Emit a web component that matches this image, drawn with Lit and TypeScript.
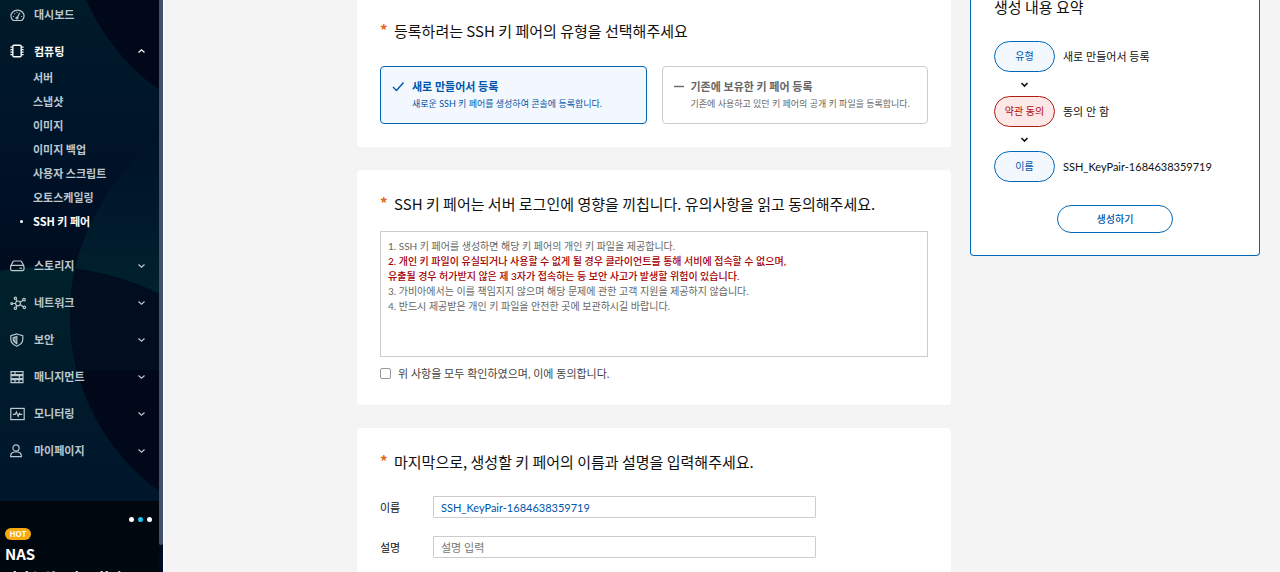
import { LitElement, html, css, svg } from "lit";
import { customElement, state } from "lit/decorators.js";

const down = svg`<path d="M1.5 1.5 L4.5 4.2 L7.5 1.5"/>`;

const icons: Record<string, unknown> = {
  dashboard: svg`<path d="M3.2 12.5 A6.6 5.9 0 1 1 11.8 12.5 Z"/><path d="M7.2 10 L9.8 4.8 M3 8.5h1 M11.2 8.5h1 M4.4 5.4l.7.6 M7 3.8v1" /><circle cx="7" cy="10" r="1"/>`,
  chip: svg`<rect x="2.8" y="1.2" width="8.4" height="11.6" rx="1.2" stroke-width="1.4"/><path d="M.4 3.2h2 M.4 5.7h2 M.4 8.2h2 M.4 10.7h2 M11.6 3.2h2 M11.6 5.7h2 M11.6 8.2h2 M11.6 10.7h2" stroke-width="1.3"/>`,
  storage: svg`<path d="M.6 7.2 L3 2.6 Q3.3 2 4 2 H10.5 Q11.2 2 11.6 2.6 L14 7.2"/><rect x=".6" y="6.4" width="13.4" height="5.2" rx="1.6"/><path d="M9.5 9.2h2.6"/>`,
  network: svg`<circle cx="8" cy="7.4" r="2.4"/><circle cx="1.8" cy="7.6" r="1"/><circle cx="5.4" cy="2.2" r="1.1"/><circle cx="14" cy="3.6" r="1.3"/><circle cx="14.4" cy="11.4" r="1.2"/><circle cx="5.4" cy="12.2" r="1.2"/><path d="M2.8 7.5h2.6 M6 3.2l.9 1.9 M10.1 6.2l2.7-1.8 M10.1 8.6l3.2 2.1 M7 9.6l-1 1.6"/>`,
  shield: svg`<path d="M6.8 1 L12.8 2.8 V6.5 Q12.6 10.8 6.8 13.2 Q1 10.8 .8 6.5 V2.8 Z"/><path d="M6.8 3.6 V10.6 Q3.4 9 3.2 6.3 V4.7 Z M5 4.4V8.9"/>`,
  management: svg`<path d="M1 1.6h12v3H1z M1 5.6h12v3H1z M1 9.6h12v3H1z M5 1.6v3 M9.4 5.6v3 M5 9.6v3 M9 9.6v3"/>`,
  monitor: svg`<rect x=".8" y="1.4" width="13.4" height="11.2"/><path d="M2.8 7.4h2.4l1.2-2.4 1.8 4.2 1.3-2.8.8 1h2"/>`,
  user: svg`<circle cx="6" cy="4" r="3.1"/><path d="M.7 12.6 V11.4 Q.9 8.4 4 8 H8 Q11.1 8.4 11.3 11.4 V12.6 Z"/>`,
};

const subItems = ["서버", "스냅샷", "이미지", "이미지 백업", "사용자 스크립트", "오토스케일링", "SSH 키 페어"];
const menuItems = [
  ["storage", "스토리지"],
  ["network", "네트워크"],
  ["shield", "보안"],
  ["management", "매니지먼트"],
  ["monitor", "모니터링"],
  ["user", "마이페이지"],
];

@customElement("side-nav")
class SideNav extends LitElement {
  static styles = css`
    :host { display: flex; position: relative; flex: 0 0 164px; overflow: hidden; background: #000c1e; color: #bcc7ce; font-family: "Noto Sans CJK KR", sans-serif; }
    .backdrop { position: absolute; inset: 0 auto auto 0; }
    .content { position: relative; flex: 1; display: flex; flex-direction: column; min-width: 0; }
    .track { position: relative; flex: 0 0 5px; background: #000a24; border-right: 1px solid #fff; box-sizing: border-box; }
    .thumb { height: 545px; background: #435069; border-radius: 0 0 3px 3px; }
    nav { flex: 0 0 501px; display: flex; flex-direction: column; box-sizing: border-box; }
    ul { list-style: none; margin: 0; padding: 0; }
    a { color: inherit; text-decoration: none; }
    .row { display: grid; grid-template-columns: 24px 1fr 9px; align-items: center; height: 37px; padding: 0 13px 0 10px; font-size: 11px; font-weight: 700; }
    .first { height: 29px; }
    .row.open { color: #fff; height: 44px; }
    .icon { width: 16px; height: 14px; fill: none; stroke: currentColor; stroke-width: 1.2; overflow: visible; }
    .arrow { width: 9px; height: 6px; fill: none; stroke: currentColor; stroke-width: 1.2; }
    .up { transform: rotate(180deg); }
    .sub { padding-bottom: 14px; margin-top: -8px; }
    .sub a { display: flex; align-items: center; height: 24px; padding-left: 33px; font-size: 11px; font-weight: 700; }
    .sub a.current { position: relative; color: #fff; }
    .current::before { content: ""; position: absolute; left: 20px; width: 3px; height: 3px; border-radius: 50%; background: #fff; }
    .banner { flex: 1; padding: 16px 5px 0; background: #00070f; color: #fff; overflow: hidden; }
    .dots { display: flex; justify-content: flex-end; gap: 4px; padding-right: 2px; }
    .dot { width: 5px; height: 5px; border-radius: 50%; background: #fff; border: 0; padding: 0; }
    .dot.on { background: #1fc3f3; }
    .hot { display: block; width: 26px; height: 12px; margin-top: 6px; border-radius: 6px; background: #f9a90d; font-size: 8px; line-height: 12px; font-weight: 700; text-align: center; }
    .name { font-size: 15px; line-height: 20px; font-weight: 700; margin: 4px 0 5px; }
    .desc { font-size: 13px; line-height: 16px; font-weight: 700; margin: 0; white-space: nowrap; }
  `;
  render() {
    return html`
      <svg class="backdrop" width="160" height="501" viewBox="0 0 160 501" aria-hidden="true">
        <defs>
          <linearGradient id="base" x1="0" y1="0" x2="0" y2="1"><stop offset="0" stop-color="#001b29"/><stop offset=".3" stop-color="#001329"/><stop offset=".55" stop-color="#000c1e"/></linearGradient>
          <linearGradient id="big" gradientUnits="userSpaceOnUse" x1="0" y1="267" x2="0" y2="501"><stop offset="0" stop-color="#00222b"/><stop offset=".5" stop-color="#001b2c"/><stop offset="1" stop-color="#00162b"/></linearGradient>
          <linearGradient id="side" gradientUnits="userSpaceOnUse" x1="0" y1="160" x2="0" y2="300"><stop offset="0" stop-color="#00142a"/><stop offset="1" stop-color="#00222e"/></linearGradient>
          <clipPath id="bigClip"><circle cx="45" cy="521" r="254"/></clipPath>
        </defs>
        <rect width="160" height="501" fill="url(#base)"/>
        <circle cx="285" cy="-87" r="217" fill="#00081a"/>
        <circle cx="287" cy="316" r="217" fill="url(#side)"/>
        <circle cx="45" cy="521" r="254" fill="url(#big)"/>
        <g clip-path="url(#bigClip)"><circle cx="287" cy="316" r="217" fill="#00081a"/><path d="M70 260H160V370H78Q70 345 70 316Q70 290 76 265Z" fill="#000e20"/></g>
      </svg>
      <div class="content">
        <nav>
          <a class="row first" href="#"><svg class="icon" viewBox="0 0 16 14">${icons.dashboard}</svg>대시보드</a>
          <a class="row open" href="#"><svg class="icon" viewBox="0 0 16 14">${icons.chip}</svg>컴퓨팅<svg class="arrow up" viewBox="0 0 9 6">${down}</svg></a>
          <ul class="sub">
            ${subItems.map((t, i) => html`<li><a href="#" class=${i === 6 ? "current" : ""}>${t}</a></li>`)}
          </ul>
          ${menuItems.map(([icon, t]) => html`<a class="row" href="#"><svg class="icon" viewBox="0 0 16 14">${icons[icon]}</svg>${t}<svg class="arrow" viewBox="0 0 9 6">${down}</svg></a>`)}
        </nav>
        <section class="banner">
          <div class="dots"><button class="dot" aria-label="1"></button><button class="dot on" aria-label="2"></button><button class="dot" aria-label="3"></button></div>
          <span class="hot">HOT</span>
          <p class="name">NAS</p>
          <p class="desc">서비스 신규 출시 할인</p>
        </section>
      </div>
      <div class="track"><div class="thumb"></div></div>
    `;
  }
}

@customElement("app-root")
class AppRoot extends LitElement {
  @state() kind = "new";
  @state() agreed = false;
  @state() name = "SSH_KeyPair-1684638359719";

  static styles = css`
    :host { display: flex; height: 100vh; overflow: hidden; background: #f4f4f4; color: #111; font-family: Lato, "Noto Sans CJK KR", sans-serif; font-size: 11px; line-height: 15px; }
    main { flex: 1; display: grid; grid-template-columns: minmax(0, 594px) 290px; justify-content: end; align-items: start; gap: 19px; padding-right: 20px; }
    .cards { display: grid; grid-template-columns: minmax(0, 1fr); gap: 23px; }
    .card { background: #fff; border-radius: 4px; padding: 22px 23px 24px; }
    .card:first-child { border-radius: 0 0 4px 4px; padding: 19px 23px 23px; }
    h2 { display: flex; gap: 8px; margin: 0; font-family: "Noto Sans CJK KR", sans-serif; font-size: 15px; line-height: 24px; font-weight: 400; }
    .star { color: #e06a14; width: 6px; line-height: 22px; font-weight: 700; }
    .options { display: grid; grid-template-columns: repeat(2, minmax(0, 1fr)); gap: 15px; margin-top: 23px; }
    .option { display: grid; grid-template-columns: auto 1fr; column-gap: 7px; text-align: left; font: inherit; background: #fff; border: 1px solid #ccc; border-radius: 4px; padding: 11px 11px; height: 58px; color: #666; }
    .option.on { background: #f2f8fe; border-color: #0068b7; color: #0055aa; }
    .option svg { width: 10px; height: 17px; fill: none; stroke: currentColor; stroke-width: 1.4; }
    .option.on svg { width: 13px; }
    .option b { font-size: 11px; line-height: 17px; font-weight: 700; }
    .option small { grid-column: 2; font-size: 9px; line-height: 18px; white-space: nowrap; }
    .terms { margin: 15px 0 0; height: 126px; box-sizing: border-box; padding: 7px; border: 1px solid #ccc; color: #666; font-size: 10px; overflow: auto; }
    .terms p { margin: 0; }
    .terms .warn { color: #a50000; font-weight: 500; }
    .agree { display: flex; align-items: center; gap: 7px; margin-top: 9px; color: #444; }
    .agree input { appearance: none; width: 11px; height: 11px; margin: 0; border: 1px solid #999; border-radius: 2px; box-sizing: border-box; background: #fff; }
    .agree input:checked { background: #0068b7; }
    .field { display: grid; grid-template-columns: 53px minmax(0, 383px); align-items: center; margin-top: 22px; }
    .field + .field { margin-top: 18px; }
    .field input { height: 22px; box-sizing: border-box; border: 1px solid #ccc; border-radius: 1px; padding: 0 7px; font: inherit; color: #0055aa; background: #fff; min-width: 0; }
    .field input::placeholder { color: #777; opacity: 1; }
    .summary { background: #fff; border: 1px solid #0068b7; border-top: 0; border-radius: 0 0 4px 4px; padding: 0 23px 22px; }
    .summary h2 { line-height: 14px; }
    .steps { display: grid; grid-template-columns: 61px 1fr; column-gap: 8px; align-items: center; margin-top: 27px; }
    .pill { box-sizing: border-box; height: 31px; font-size: 10px; line-height: 28px; border: 1px solid #0068b7; border-radius: 16px; background: #f2f8fe; color: #0055aa; text-align: center; }
    .pill.bad { border-color: #b01c10; background: #fbe8e7; color: #b00c10; }
    .next { grid-column: 1; justify-self: center; width: 9px; height: 24px; fill: none; stroke: #111; stroke-width: 1.6; }
    .create { display: block; margin: 23px auto 0; width: 116px; height: 28px; border: 1px solid #0068b7; border-radius: 14px; background: #fff; color: #0055aa; font: inherit; font-size: 10px; font-weight: 500; padding: 0; }
  `;

  render() {
    const isNew = this.kind === "new";
    const check = html`<svg viewBox="0 0 13 17"><path d="M1 9 L4.5 12.5 L11.5 4.5"/></svg>`;
    const dash = html`<svg viewBox="0 0 10 17"><path d="M0 8.5 H10"/></svg>`;
    const next = html`<svg class="next" viewBox="0 0 9 24"><path d="M1.5 11 L4.5 14 L7.5 11"/></svg><span></span>`;
    return html`
      <side-nav></side-nav>
      <main>
        <div class="cards">
          <section class="card">
            <h2><span class="star">*</span>등록하려는 SSH 키 페어의 유형을 선택해주세요</h2>
            <div class="options">
              <button class="option ${isNew ? "on" : ""}" aria-pressed=${isNew} @click=${() => (this.kind = "new")}>
                ${isNew ? check : dash}<b>새로 만들어서 등록</b><small>새로운 SSH 키 페어를 생성하여 콘솔에 등록합니다.</small>
              </button>
              <button class="option ${isNew ? "" : "on"}" aria-pressed=${!isNew} @click=${() => (this.kind = "own")}>
                ${isNew ? dash : check}<b>기존에 보유한 키 페어 등록</b><small>기존에 사용하고 있던 키 페어의 공개 키 파일을 등록합니다.</small>
              </button>
            </div>
          </section>
          <section class="card">
            <h2><span class="star">*</span>SSH 키 페어는 서버 로그인에 영향을 끼칩니다. 유의사항을 읽고 동의해주세요.</h2>
            <div class="terms">
              <p>1. SSH 키 페어를 생성하면 해당 키 페어의 개인 키 파일을 제공합니다.</p>
              <p class="warn">2. 개인 키 파일이 유실되거나 사용할 수 없게 될 경우 클라이언트를 통해 서비에 접속할 수 없으며,<br />유출될 경우 허가받지 않은 제 3자가 접속하는 등 보안 사고가 발생할 위험이 있습니다.</p>
              <p>3. 가비아에서는 이를 책임지지 않으며 해당 문제에 관한 고객 지원을 제공하지 않습니다.</p>
              <p>4. 반드시 제공받은 개인 키 파일을 안전한 곳에 보관하시길 바랍니다.</p>
            </div>
            <label class="agree"><input type="checkbox" .checked=${this.agreed} @change=${(e: Event) => (this.agreed = (e.target as HTMLInputElement).checked)} />위 사항을 모두 확인하였으며, 이에 동의합니다.</label>
          </section>
          <section class="card">
            <h2><span class="star">*</span>마지막으로, 생성할 키 페어의 이름과 설명을 입력해주세요.</h2>
            <div class="field"><label for="name">이름</label><input id="name" .value=${this.name} @input=${(e: Event) => (this.name = (e.target as HTMLInputElement).value)} /></div>
            <div class="field"><label for="desc">설명</label><input id="desc" placeholder="설명 입력" /></div>
          </section>
        </div>
        <aside class="summary">
          <h2>생성 내용 요약</h2>
          <div class="steps">
            <span class="pill">유형</span><span>${isNew ? "새로 만들어서 등록" : "기존에 보유한 키 페어 등록"}</span>
            ${next}
            <span class="pill ${this.agreed ? "" : "bad"}">약관 동의</span><span>${this.agreed ? "동의함" : "동의 안 함"}</span>
            ${next}
            <span class="pill">이름</span><span>${this.name}</span>
          </div>
          <button class="create">생성하기</button>
        </aside>
      </main>
    `;
  }
}
